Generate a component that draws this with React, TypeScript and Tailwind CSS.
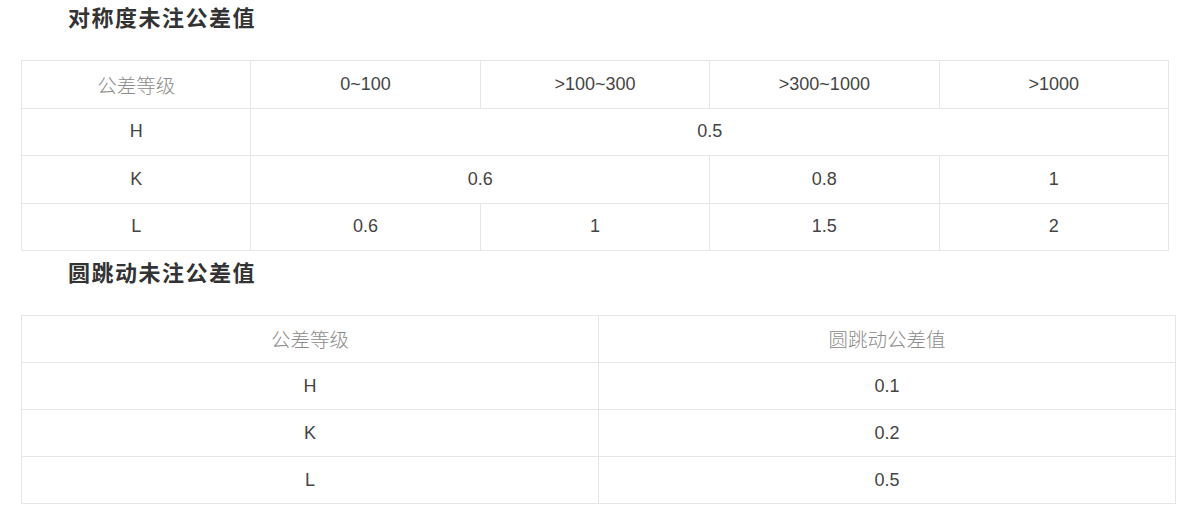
const cjk = "font-['Noto_Sans_CJK_SC',sans-serif]";
const num = "font-['Liberation_Sans','Noto_Sans_CJK_SC',sans-serif]";

const cell = `border border-[#e6e6e6] text-center align-middle text-[18px] text-[#444] ${num}`;
const headCjk = `border border-[#e6e6e6] text-center align-middle text-[19.5px] font-light text-[#8c8c8c] ${cjk}`;

const Title = ({ children, className }: { children: string; className: string }) => (
    <h2 className={`pl-[68px] text-[22px] font-bold tracking-[1.5px] text-[#333] ${cjk} ${className}`}>
        {children}
    </h2>
);

export default function App() {
    return (
        <div className="w-[1192px] h-[518px] bg-white overflow-hidden">
            <Title className="leading-[32px] mb-[28px]">对称度未注公差值</Title>

            <table className="ml-[21px] w-[1148px] table-fixed border-collapse">
                <tbody>
                    <tr className="h-[47.5px]">
                        <td className={headCjk}>公差等级</td>
                        <td className={cell}>0~100</td>
                        <td className={cell}>&gt;100~300</td>
                        <td className={cell}>&gt;300~1000</td>
                        <td className={cell}>&gt;1000</td>
                    </tr>
                    <tr className="h-[47.5px]">
                        <td className={cell}>H</td>
                        <td className={cell} colSpan={4}>0.5</td>
                    </tr>
                    <tr className="h-[47.5px]">
                        <td className={cell}>K</td>
                        <td className={cell} colSpan={2}>0.6</td>
                        <td className={cell}>0.8</td>
                        <td className={cell}>1</td>
                    </tr>
                    <tr className="h-[47.5px]">
                        <td className={cell}>L</td>
                        <td className={cell}>0.6</td>
                        <td className={cell}>1</td>
                        <td className={cell}>1.5</td>
                        <td className={cell}>2</td>
                    </tr>
                </tbody>
            </table>

            <Title className="leading-[40px] mb-[24px]">圆跳动未注公差值</Title>

            <table className="ml-[21px] w-[1155px] table-fixed border-collapse">
                <colgroup>
                    <col className="w-[577px]" />
                    <col />
                </colgroup>
                <tbody>
                    <tr className="h-[47px]">
                        <td className={headCjk}>公差等级</td>
                        <td className={headCjk}>圆跳动公差值</td>
                    </tr>
                    <tr className="h-[47px]">
                        <td className={cell}>H</td>
                        <td className={cell}>0.1</td>
                    </tr>
                    <tr className="h-[47px]">
                        <td className={cell}>K</td>
                        <td className={cell}>0.2</td>
                    </tr>
                    <tr className="h-[47px]">
                        <td className={cell}>L</td>
                        <td className={cell}>0.5</td>
                    </tr>
                </tbody>
            </table>
        </div>
    );
}
